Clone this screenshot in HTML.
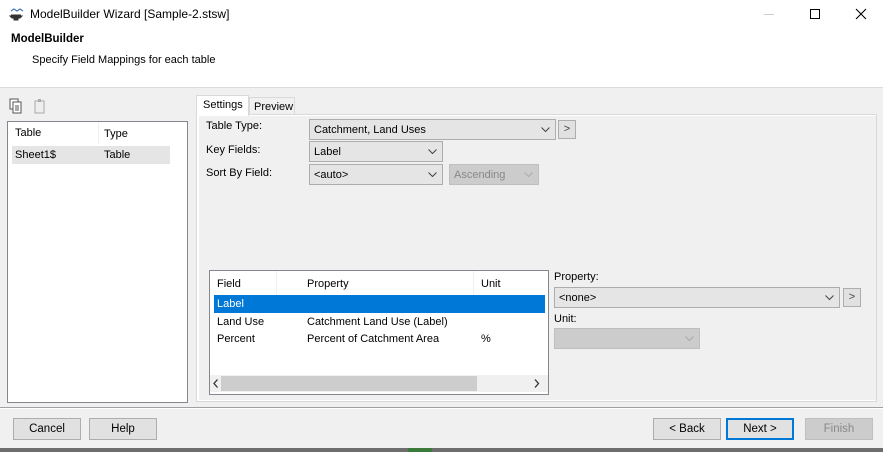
<!DOCTYPE html>
<html><head><style>
*{box-sizing:border-box;margin:0;padding:0}
body{width:883px;height:452px;overflow:hidden;background:#f0f0f0;font-family:"Liberation Sans",sans-serif;font-size:11px;color:#000;position:relative}
.a{position:absolute}
.cb{position:absolute;background:#e5e5e5;border:1px solid #adadad;padding:4px 0 0 4px;font-size:11px}
.cb svg{position:absolute;right:5px;top:7px}
.btn{position:absolute;background:#e1e1e1;border:1px solid #adadad;text-align:center;padding-top:4px;font-size:11.5px}
.sm{position:absolute;background:#e1e1e1;border:1px solid #adadad;text-align:center;font-size:11px;color:#444}
</style></head><body>
<div class="a" style="left:0;top:0;width:883px;height:88px;background:#fff;border-bottom:1px solid #dcdcdc"></div>
<svg class="a" style="left:8px;top:7px" width="18" height="14"><path d="M2 9h12l-2 2h-8z M6 11h4v2h-4z M3 8h10" fill="#333" stroke="#333"/><path d="M3 4l3-2 3 2 3-2 3 2" stroke="#4a7ab8" fill="none" stroke-width="1.3"/></svg>
<div class="a" style="left:30px;top:7px;font-size:12px">ModelBuilder Wizard [Sample-2.stsw]</div>
<div class="a" style="left:764px;top:14px;width:10px;height:1px;background:#ccc"></div>
<div class="a" style="left:810px;top:9px;width:10px;height:10px;border:1px solid #000"></div>
<svg class="a" style="left:855px;top:8px" width="12" height="12"><path d="M1 1L11 11M11 1L1 11" stroke="#000" stroke-width="1.1"/></svg>
<div class="a" style="left:11px;top:33px;font-weight:bold;font-size:11.5px">ModelBuilder</div>
<div class="a" style="left:32px;top:54px;font-size:11px">Specify Field Mappings for each table</div>

<svg class="a" style="left:9px;top:98px" width="40" height="16"><rect x="1" y="1" width="8" height="10" fill="#fff" stroke="#555"/><rect x="4" y="4" width="8" height="11" fill="#fff" stroke="#555"/><path d="M6 8h4M6 10h4M6 12h4" stroke="#555"/><rect x="26" y="3" width="9" height="12" fill="#eee" stroke="#aaa"/><rect x="29" y="1" width="3" height="3" fill="#aaa"/></svg>

<div class="a" style="left:7px;top:121px;width:181px;height:282px;background:#fff;border:1px solid #828790"></div>
<div class="a" style="left:98px;top:122px;width:1px;height:23px;background:#f0f0f0"></div>
<div class="a" style="left:15px;top:127px">Table</div>
<div class="a" style="left:104px;top:128px">Type</div>
<div class="a" style="left:12px;top:146px;width:158px;height:18px;background:#e5e5e5"></div>
<div class="a" style="left:15px;top:149px">Sheet1$</div>
<div class="a" style="left:104px;top:149px">Table</div>

<div class="a" style="left:196px;top:114px;width:681px;height:288px;background:#fff;border:1px solid #d9d9d9"></div>
<div class="a" style="left:199px;top:116px;width:677px;height:284px;background:#f0f0f0"></div>
<div class="a" style="left:249px;top:97px;width:46px;height:18px;background:#f0f0f0;border:1px solid #d9d9d9;padding:3px 0 0 4px">Preview</div>
<div class="a" style="left:196px;top:95px;width:53px;height:21px;background:#fff;border:1px solid #d9d9d9;border-bottom:none;padding:3px 0 0 6px">Settings</div>

<div class="a" style="left:206px;top:120px">Table Type:</div>
<div class="a" style="left:206px;top:144px">Key Fields:</div>
<div class="a" style="left:206px;top:167px">Sort By Field:</div>
<div class="cb" style="left:309px;top:119px;width:247px;height:21px">Catchment, Land Uses<svg width="9" height="6"><path d="M0.5 0.5L4.5 4.5L8.5 0.5" stroke="#444" fill="none"/></svg></div>
<div class="sm" style="left:558px;top:120px;width:18px;height:19px;padding-top:2px">&gt;</div>
<div class="cb" style="left:309px;top:141px;width:134px;height:21px">Label<svg width="9" height="6"><path d="M0.5 0.5L4.5 4.5L8.5 0.5" stroke="#444" fill="none"/></svg></div>
<div class="cb" style="left:309px;top:164px;width:134px;height:21px">&lt;auto&gt;<svg width="9" height="6"><path d="M0.5 0.5L4.5 4.5L8.5 0.5" stroke="#444" fill="none"/></svg></div>
<div class="cb" style="left:449px;top:164px;width:90px;height:21px;background:#ccc;border-color:#bfbfbf;color:#888">Ascending<svg width="9" height="6"><path d="M0.5 0.5L4.5 4.5L8.5 0.5" stroke="#aaa" fill="none"/></svg></div>

<div class="a" style="left:209px;top:270px;width:340px;height:125px;background:#fff;border:1px solid #828790"></div>
<div class="a" style="left:276px;top:271px;width:1px;height:24px;background:#f0f0f0"></div>
<div class="a" style="left:473px;top:271px;width:1px;height:24px;background:#f0f0f0"></div>
<div class="a" style="left:217px;top:278px">Field</div>
<div class="a" style="left:307px;top:278px">Property</div>
<div class="a" style="left:481px;top:278px">Unit</div>
<div class="a" style="left:214px;top:295px;width:331px;height:18px;background:#0078d7;color:#fff;padding:3px 0 0 3px">Label</div>
<div class="a" style="left:217px;top:316px">Land Use</div>
<div class="a" style="left:307px;top:316px">Catchment Land Use (Label)</div>
<div class="a" style="left:217px;top:333px">Percent</div>
<div class="a" style="left:307px;top:333px">Percent of Catchment Area</div>
<div class="a" style="left:481px;top:333px">%</div>
<div class="a" style="left:210px;top:375px;width:338px;height:17px;background:#f0f0f0"></div>
<div class="a" style="left:221px;top:376px;width:256px;height:15px;background:#cdcdcd"></div>
<svg class="a" style="left:213px;top:379px" width="6" height="9"><path d="M4.5 0.5L1 4.5L4.5 8.5" stroke="#333" fill="none" stroke-width="1.3"/></svg>
<svg class="a" style="left:534px;top:379px" width="6" height="9"><path d="M1 0.5L4.5 4.5L1 8.5" stroke="#333" fill="none" stroke-width="1.3"/></svg>

<div class="a" style="left:554px;top:271px">Property:</div>
<div class="cb" style="left:554px;top:287px;width:286px;height:21px">&lt;none&gt;<svg width="9" height="6"><path d="M0.5 0.5L4.5 4.5L8.5 0.5" stroke="#444" fill="none"/></svg></div>
<div class="sm" style="left:843px;top:288px;width:18px;height:19px;padding-top:2px">&gt;</div>
<div class="a" style="left:554px;top:313px">Unit:</div>
<div class="cb" style="left:554px;top:328px;width:146px;height:21px;background:#ccc;border-color:#bfbfbf"><svg width="9" height="6"><path d="M0.5 0.5L4.5 4.5L8.5 0.5" stroke="#aaa" fill="none"/></svg></div>

<div class="a" style="left:0;top:407px;width:883px;height:1px;background:#a0a0a0"></div>
<div class="a" style="left:0;top:408px;width:883px;height:1px;background:#fff"></div>
<div class="btn" style="left:13px;top:418px;width:68px;height:22px">Cancel</div>
<div class="btn" style="left:89px;top:418px;width:68px;height:22px">Help</div>
<div class="btn" style="left:653px;top:418px;width:68px;height:22px">&lt; Back</div>
<div class="btn" style="left:726px;top:418px;width:68px;height:22px;border:2px solid #0078d7;padding-top:3px">Next &gt;</div>
<div class="btn" style="left:805px;top:418px;width:68px;height:22px;background:#ccc;border-color:#bfbfbf;color:#8a8a8a">Finish</div>
<div class="a" style="left:0;top:448px;width:883px;height:4px;background:#6d6d6d"></div>
<div class="a" style="left:408px;top:448px;width:24px;height:4px;background:#3a7a3a"></div>
</body></html>
